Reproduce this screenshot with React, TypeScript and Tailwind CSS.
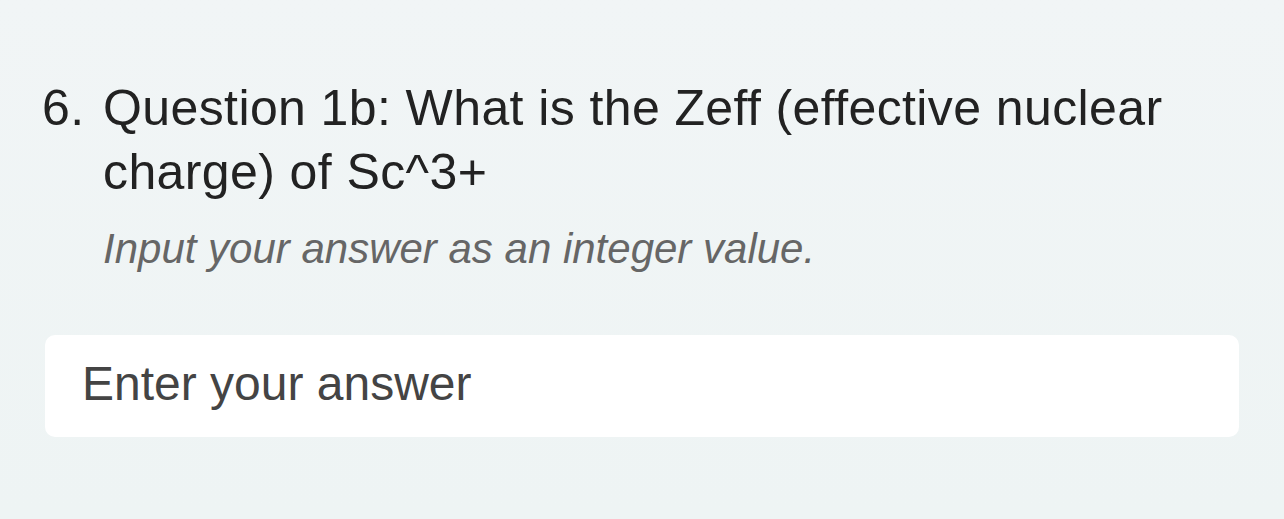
import React from 'react';

export default function App() {
  return (
    <div className="min-h-[519px] w-full bg-gradient-to-b from-[#f1f5f6] to-[#eef4f4] font-['Liberation_Sans',Arial,sans-serif] pt-[76px] pl-[42px] pr-[45px]">
      <div className="flex text-[50px] leading-[64px] tracking-[0.4px] text-[#222]">
        <span className="w-[61px] shrink-0">6.</span>
        <h2 className="font-normal">Question 1b: What is the Zeff (effective nuclear charge) of Sc^3+</h2>
      </div>
      <p className="pl-[61px] mt-[20px] text-[42px] leading-[50px] italic text-[#666]">
        Input your answer as an integer value.
      </p>
      <div className="ml-[3px] mt-[61px]">
        <input
          type="text"
          placeholder="Enter your answer"
          className="w-full h-[102px] rounded-[10px] bg-white px-[37px] pb-[6px] text-[48px] text-[#222] placeholder:text-[#444] outline-none"
        />
      </div>
    </div>
  );
}
